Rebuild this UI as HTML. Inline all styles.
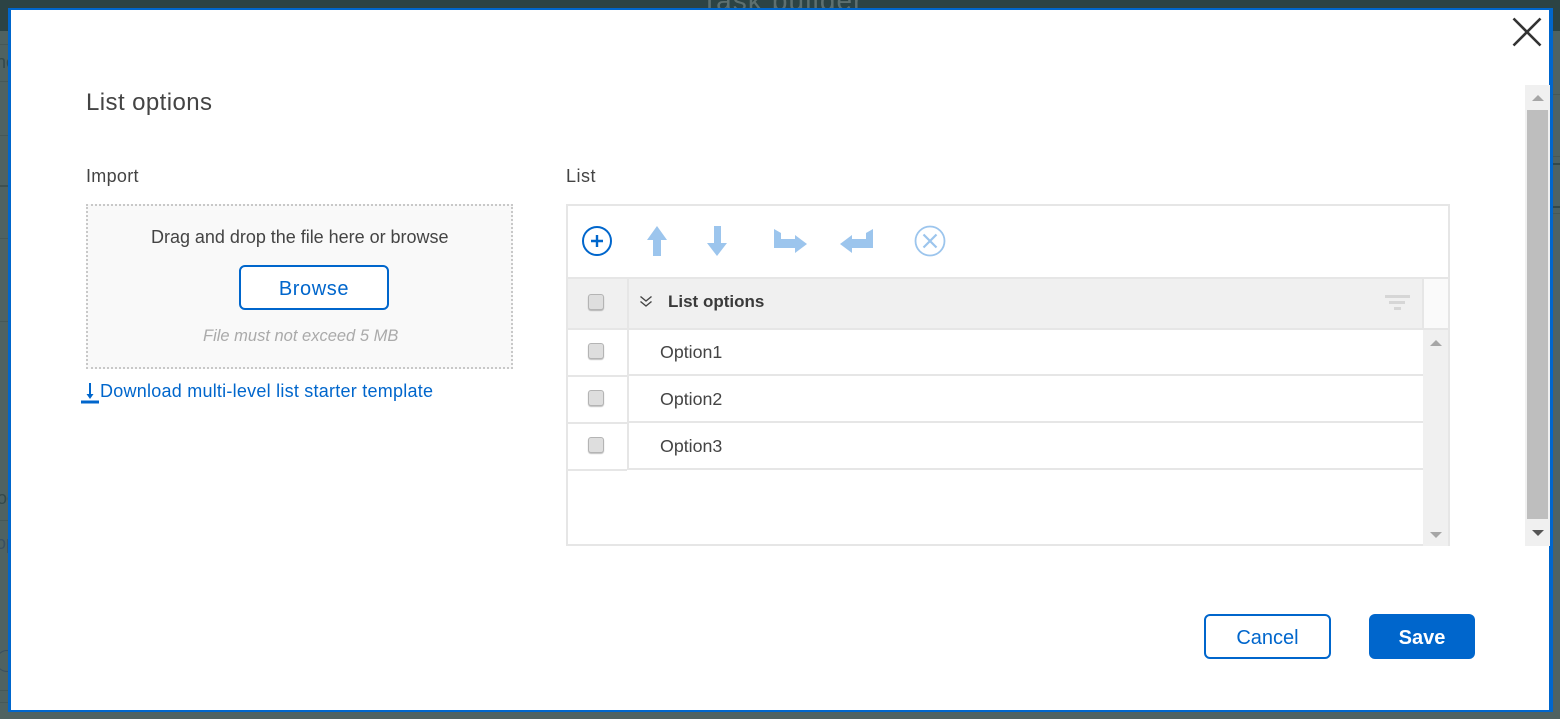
<!DOCTYPE html>
<html>
<head>
<meta charset="utf-8">
<style>
html,body{margin:0;padding:0;width:1560px;height:719px;overflow:hidden;background:#4f6261;font-family:"Liberation Sans",sans-serif;color:#333}
.a{position:absolute;white-space:nowrap}
.cb{position:absolute;width:14px;height:14px;left:588px;border:1px solid #b4b4b4;border-radius:3px;background:#dedede;box-shadow:0 1px 1px rgba(0,0,0,.25)}
.opt{font-size:17.800px;line-height:20px;left:660px;color:#444}
.line{position:absolute;background:#e6e6e6}
.bg{position:absolute;height:1px;background:#465857}
</style>
</head>
<body>
<div class="a" style="left:0;top:0;width:1560px;height:31px;background:#2c4344"></div>
<div class="a" style="left:701px;top:-14px;font-size:28px;line-height:30px;color:#5d7070;letter-spacing:1.100px">Task builder</div>

<div class="bg" style="left:0;top:44px;width:8px"></div>
<div class="bg" style="left:0;top:81px;width:8px"></div>
<div class="bg" style="left:0;top:135px;width:8px"></div>
<div class="bg" style="left:0;top:185px;width:8px;height:2px;background:#3f5150"></div>
<div class="bg" style="left:0;top:238px;width:8px"></div>
<div class="bg" style="left:0;top:321px;width:8px"></div>
<div class="bg" style="left:0;top:520px;width:8px"></div>
<div class="bg" style="left:0;top:690px;width:8px"></div>
<div class="bg" style="left:0;top:702px;width:8px"></div>
<div class="bg" style="left:1553px;top:94px;width:7px"></div>
<div class="bg" style="left:1553px;top:156px;width:7px"></div>
<div class="bg" style="left:1553px;top:163px;width:7px;height:2px;background:#34494a"></div>
<div class="bg" style="left:1553px;top:206px;width:7px;height:2px;background:#34494a"></div>
<div class="bg" style="left:1553px;top:213px;width:7px"></div>

<div class="a" style="left:-4px;top:52px;font-size:18px;line-height:20px;color:#34494a">ne</div>
<div class="a" style="left:-3px;top:488px;font-size:18px;line-height:20px;color:#34494a">oc</div>
<div class="a" style="left:-4px;top:533px;font-size:18px;line-height:20px;color:#3a4f5f">op</div>
<div class="a" style="left:-4px;top:650px;width:20px;height:20px;border:1px solid #3a4f5f;border-radius:50%"></div>

<div class="a" style="left:8px;top:8px;width:1538px;height:700px;border:3px solid #0066cc;border-top-width:2px;border-bottom-width:2px;background:#fff;border-right-width:4px"></div>

<svg class="a" style="left:1512px;top:17px" width="30" height="30" viewBox="0 0 30 30"><path d="M1.500 1.500L28.500 28.500M28.500 1.500L1.500 28.500" stroke="#333" stroke-width="2.600" fill="none"/></svg>

<div class="a" style="left:86px;top:89px;font-size:24px;line-height:28px;color:#444;letter-spacing:.42px">List options</div>
<div class="a" style="left:86px;top:166px;font-size:18px;line-height:20px;color:#444;letter-spacing:.3px">Import</div>
<div class="a" style="left:566px;top:166px;font-size:18px;line-height:20px;color:#444;letter-spacing:.5px">List</div>

<div class="a" style="left:86px;top:204px;width:423px;height:161px;border:2px dotted #c8c8c8;background:#f9f9f9"></div>
<div class="a" style="left:151px;top:227px;font-size:18px;line-height:20px;color:#444;letter-spacing:-.02px">Drag and drop the file here or browse</div>
<div class="a" style="left:239px;top:265px;width:146px;height:41px;border:2px solid #0066cc;border-radius:6px;background:#fff;color:#0066cc;font-size:20px;line-height:44px;text-align:center;letter-spacing:.6px">Browse</div>
<div class="a" style="left:203px;top:326px;font-size:16.500px;line-height:20px;color:#aaa;font-style:italic">File must not exceed 5 MB</div>

<svg class="a" style="left:81px;top:382px" width="19" height="22" viewBox="0 0 19 22"><path d="M9 1V14" stroke="#0066cc" stroke-width="2" fill="none"/><path d="M5.500 12L9 17L12.500 12Z" fill="#0066cc"/><rect x="0" y="18.500" width="18" height="3" fill="#0066cc"/></svg>
<div class="a" style="left:100px;top:381px;font-size:18px;line-height:20px;color:#0066cc;letter-spacing:.24px">Download multi-level list starter template</div>

<!-- grid -->
<div class="a" style="left:566px;top:204px;width:880px;height:338px;border:2px solid #e6e6e6;background:#fff"></div>
<div class="line" style="left:568px;top:277px;width:880px;height:2px"></div>
<div class="a" style="left:568px;top:279px;width:854px;height:49px;background:#f0f0f0"></div>
<div class="a" style="left:1424px;top:279px;width:24px;height:49px;background:#fafafa"></div>
<div class="line" style="left:1422px;top:279px;width:2px;height:49px"></div>
<div class="line" style="left:568px;top:328px;width:880px;height:2px"></div>
<div class="line" style="left:627px;top:279px;width:2px;height:191px"></div>
<div class="line" style="left:629px;top:374px;width:794px;height:2px"></div>
<div class="line" style="left:629px;top:421px;width:794px;height:2px"></div>
<div class="line" style="left:629px;top:468px;width:794px;height:2px"></div>
<div class="line" style="left:568px;top:375px;width:59px;height:2px"></div>
<div class="line" style="left:568px;top:422px;width:59px;height:2px"></div>
<div class="line" style="left:568px;top:469px;width:59px;height:2px"></div>
<div class="a" style="left:1423px;top:330px;width:25px;height:216px;background:#f0f0f0"></div>
<svg class="a" style="left:1430px;top:340px" width="12" height="6"><path d="M0 6L6 0L12 6Z" fill="#a6a6a6"/></svg>
<svg class="a" style="left:1430px;top:532px" width="12" height="6"><path d="M0 0L6 6L12 0Z" fill="#a6a6a6"/></svg>

<!-- toolbar -->
<svg class="a" style="left:566px;top:206px" width="400" height="70" viewBox="566 206 400 70">
<circle cx="597" cy="241" r="14" fill="none" stroke="#0066cc" stroke-width="2"/>
<path d="M597 235V247M591 241H603" stroke="#0066cc" stroke-width="2.400" fill="none"/>
<path d="M657 226L667 240H661V256H653V240H647Z" fill="#9cc5ed"/>
<path d="M714 226H721V243H727L717 256L707 243H714Z" fill="#9cc5ed"/>
<path d="M774 229L781 233V239H795V235L807 244L795 253V248H774Z" fill="#9cc5ed"/>
<path d="M873 229L866 233V239H852V235L840 244L852 253V248H873Z" fill="#9cc5ed"/>
<circle cx="930" cy="241" r="14.500" fill="none" stroke="#9cc5ed" stroke-width="1.800"/>
<path d="M923.500 234.500L936.500 247.500M936.500 234.500L923.500 247.500" stroke="#9cc5ed" stroke-width="2.200" fill="none"/>
</svg>

<div class="cb" style="top:294px"></div>
<div class="cb" style="top:343px"></div>
<div class="cb" style="top:390px"></div>
<div class="cb" style="top:437px"></div>

<svg class="a" style="left:639px;top:295px" width="14" height="14" viewBox="0 0 14 14"><path d="M1.500 1.500L7 6L12.500 1.500M1.500 6.500L7 11L12.500 6.500" stroke="#444" stroke-width="1.400" fill="none"/></svg>
<div class="a" style="left:668px;top:292px;font-size:17px;line-height:20px;font-weight:bold;color:#3a3a3a">List options</div>
<svg class="a" style="left:1385px;top:295px" width="25" height="16"><rect x="0" y="0" width="25" height="3" fill="#d6d6d6"/><rect x="4" y="6" width="16" height="3" fill="#d6d6d6"/><rect x="9" y="12" width="7" height="3" fill="#d6d6d6"/></svg>

<div class="a opt" style="top:342px">Option1</div>
<div class="a opt" style="top:389px">Option2</div>
<div class="a opt" style="top:436px">Option3</div>

<!-- modal scrollbar -->
<div class="a" style="left:1525px;top:85px;width:25px;height:461px;background:#f0f0f0"></div>
<div class="a" style="left:1527px;top:110px;width:21px;height:409px;background:#bebebe"></div>
<svg class="a" style="left:1532px;top:95px" width="12" height="6"><path d="M0 6L6 0L12 6Z" fill="#a6a6a6"/></svg>
<svg class="a" style="left:1532px;top:530px" width="12" height="6"><path d="M0 0L6 6L12 0Z" fill="#555"/></svg>

<!-- buttons -->
<div class="a" style="left:1204px;top:614px;width:123px;height:41px;border:2px solid #0066cc;border-radius:6px;color:#0066cc;font-size:20px;line-height:44px;text-align:center;background:#fff">Cancel</div>
<div class="a" style="left:1369px;top:614px;width:106px;height:45px;border-radius:6px;background:#0066cc;color:#fff;font-size:20px;font-weight:bold;line-height:48px;text-align:center">Save</div>
</body>
</html>
